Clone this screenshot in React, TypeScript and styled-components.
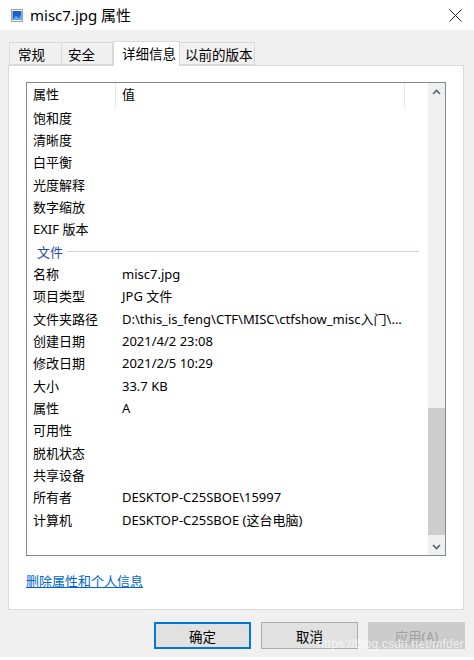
import React from "react";
import styled, { createGlobalStyle } from "styled-components";

const Global = createGlobalStyle`
  html, body { margin: 0; padding: 0; background: #ffffff; }
  body { font-family: "Noto Sans", "Noto Sans CJK SC", sans-serif; }
  * { box-sizing: border-box; }
`;

const FONT = `"Noto Sans", "Noto Sans CJK SC", sans-serif`;

const Window = styled.div`
  position: relative;
  width: 474px;
  height: 657px;
  background: #f0f0f0;
  display: flex;
  flex-direction: column;
  font-family: ${FONT};
  color: #000;
  overflow: hidden;
`;

const TitleBar = styled.div`
  height: 30px;
  background: #ffffff;
  display: flex;
  align-items: center;
  padding: 0 12px 0 11px;
  flex-shrink: 0;
`;

const Title = styled.div`
  font-size: 15px;
  margin-left: 7px;
  flex: 1;
  line-height: 1.2;
`;

const CloseBtn = styled.div`
  width: 14px;
  height: 14px;
  display: flex;
  align-items: center;
  justify-content: center;
`;

const TabStrip = styled.div`
  display: flex;
  align-items: flex-end;
  padding-left: 9px;
  margin-top: 10px;
  height: 25px;
  position: relative;
  z-index: 1;
`;

const Tab = styled.div<{ $w: number; $pl: number; $active?: boolean }>`
  width: ${(p) => p.$w}px;
  height: ${(p) => (p.$active ? 25 : 23)}px;
  padding-left: ${(p) => p.$pl}px;
  background: ${(p) => (p.$active ? "#ffffff" : "#f0f0f0")};
  border: 1px solid #d9d9d9;
  border-bottom: ${(p) => (p.$active ? "none" : "1px solid #d9d9d9")};
  border-left: ${(p) => (p.$active ? "1px solid #d9d9d9" : "none")};
  margin-bottom: ${(p) => (p.$active ? -1 : 0)}px;
  display: flex;
  align-items: center;
  font-size: 13.5px;
  white-space: nowrap;
  padding-bottom: ${(p) => (p.$active ? 3 : 0)}px;
  &:first-child { border-left: 1px solid #d9d9d9; }
`;

const Panel = styled.div`
  margin: 0 10px 0 8px;
  height: 545px;
  background: #ffffff;
  border: 1px solid #d9d9d9;
  display: flex;
  flex-direction: column;
  padding: 16px 17px 0 17px;
`;

const ListBox = styled.div`
  width: 420px;
  height: 474px;
  border: 1px solid #828790;
  display: flex;
  background: #ffffff;
`;

const ListMain = styled.div`
  flex: 1;
  display: flex;
  flex-direction: column;
  overflow: hidden;
`;

const HeaderRow = styled.div`
  height: 23.5px;
  display: grid;
  grid-template-columns: 89px 289px 1fr;
  flex-shrink: 0;
`;

const HeaderCell = styled.div<{ $divider?: boolean }>`
  font-size: 13px;
  display: flex;
  align-items: center;
  padding-left: 6px;
  padding-bottom: 2px;
  border-right: ${(p) => (p.$divider ? "1px solid #e5e5e5" : "none")};
`;

const Row = styled.div`
  height: 22.33px;
  display: grid;
  grid-template-columns: 89px 1fr;
  align-items: center;
  font-size: 13px;
  white-space: nowrap;
  flex-shrink: 0;
`;

const Cell = styled.div`
  padding-left: 6px;
  line-height: 18px;
`;

const GroupRow = styled.div`
  height: 22.33px;
  display: flex;
  align-items: center;
  padding-left: 10px;
  padding-right: 9px;
  flex-shrink: 0;
  gap: 4px;
`;

const GroupLabel = styled.span`
  font-size: 13px;
  color: #2a4a9c;
  line-height: 18px;
`;

const GroupLine = styled.div`
  flex: 1;
  height: 1px;
  background: #cbd3e6;
`;

const ScrollBar = styled.div`
  width: 17px;
  background: #f0f0f0;
  display: flex;
  flex-direction: column;
  flex-shrink: 0;
`;

const ScrollArrow = styled.div`
  height: 17px;
  display: flex;
  align-items: center;
  justify-content: center;
  flex-shrink: 0;
`;

const ScrollTrack = styled.div`
  flex: 1;
  display: flex;
  flex-direction: column;
  justify-content: flex-end;
  padding-bottom: 3px;
`;

const Thumb = styled.div`
  height: 127px;
  background: #cdcdcd;
`;

const LinkText = styled.a`
  margin-top: 16px;
  font-size: 13px;
  color: #0066cc;
  text-decoration: underline;
  cursor: pointer;
  align-self: flex-start;
  line-height: 18px;
`;

const ButtonBar = styled.div`
  display: flex;
  justify-content: flex-end;
  gap: 10px;
  padding-right: 9px;
  margin-top: 12px;
`;

const Button = styled.div<{ $primary?: boolean; $disabled?: boolean }>`
  width: 97px;
  height: 27px;
  display: flex;
  align-items: center;
  justify-content: center;
  font-size: 13.5px;
  background: ${(p) => (p.$disabled ? "#cccccc" : "#e1e1e1")};
  color: ${(p) => (p.$disabled ? "#a0a0a0" : "#000")};
  border: ${(p) =>
    p.$primary ? "2px solid #0078d7" : p.$disabled ? "1px solid #cccccc" : "1px solid #adadad"};
`;

const Watermark = styled.div`
  position: absolute;
  right: 10px;
  top: 637px;
  font-family: "Liberation Sans", sans-serif;
  font-size: 12px;
  color: rgba(255, 255, 255, 0.7);
  letter-spacing: 0.2px;
  pointer-events: none;
`;

const FileIcon = () => (
  <svg width="12" height="13" viewBox="0 0 12 13">
    <rect x="0.5" y="0.5" width="11" height="12" fill="#ffffff" stroke="#9aa4b0" />
    <rect x="1.5" y="2" width="9" height="9" fill="#1d63c4" />
    <path d="M1.5 11 L5 6.5 L7.5 9 L10.5 5.5 L10.5 11 Z" fill="#5fa8ee" />
  </svg>
);

const CloseIcon = () => (
  <svg width="13" height="13" viewBox="0 0 13 13">
    <path d="M0.5 0.5 L12.5 12.5 M12.5 0.5 L0.5 12.5" stroke="#222" strokeWidth="1" />
  </svg>
);

const Chevron = ({ up }: { up?: boolean }) => (
  <svg width="9" height="6" viewBox="0 0 9 6">
    <path
      d={up ? "M1 5 L4.5 1.5 L8 5" : "M1 1 L4.5 4.5 L8 1"}
      stroke="#606060"
      strokeWidth="1.6"
      fill="none"
    />
  </svg>
);

type Item = [string, string] | "group";

const items: Item[] = [
  ["饱和度", ""],
  ["清晰度", ""],
  ["白平衡", ""],
  ["光度解释", ""],
  ["数字缩放", ""],
  ["EXIF 版本", ""],
  "group",
  ["名称", "misc7.jpg"],
  ["项目类型", "JPG 文件"],
  ["文件夹路径", "D:\\this_is_feng\\CTF\\MISC\\ctfshow_misc入门\\..."],
  ["创建日期", "2021/4/2 23:08"],
  ["修改日期", "2021/2/5 10:29"],
  ["大小", "33.7 KB"],
  ["属性", "A"],
  ["可用性", ""],
  ["脱机状态", ""],
  ["共享设备", ""],
  ["所有者", "DESKTOP-C25SBOE\\15997"],
  ["计算机", "DESKTOP-C25SBOE (这台电脑)"],
];

export default function App() {
  return (
    <>
      <Global />
      <Window>
        <TitleBar>
          <FileIcon />
          <Title>misc7.jpg 属性</Title>
          <CloseBtn>
            <CloseIcon />
          </CloseBtn>
        </TitleBar>
        <TabStrip>
          <Tab $w={53} $pl={8}>常规</Tab>
          <Tab $w={51} $pl={6}>安全</Tab>
          <Tab $w={67} $pl={8} $active>详细信息</Tab>
          <Tab $w={75} $pl={5}>以前的版本</Tab>
        </TabStrip>
        <Panel>
          <ListBox>
            <ListMain>
              <HeaderRow>
                <HeaderCell $divider>属性</HeaderCell>
                <HeaderCell $divider>值</HeaderCell>
                <HeaderCell />
              </HeaderRow>
              {items.map((it, i) =>
                it === "group" ? (
                  <GroupRow key={i}>
                    <GroupLabel>文件</GroupLabel>
                    <GroupLine />
                  </GroupRow>
                ) : (
                  <Row key={i}>
                    <Cell>{it[0]}</Cell>
                    <Cell>{it[1]}</Cell>
                  </Row>
                )
              )}
            </ListMain>
            <ScrollBar>
              <ScrollArrow>
                <Chevron up />
              </ScrollArrow>
              <ScrollTrack>
                <Thumb />
              </ScrollTrack>
              <ScrollArrow>
                <Chevron />
              </ScrollArrow>
            </ScrollBar>
          </ListBox>
          <LinkText>删除属性和个人信息</LinkText>
        </Panel>
        <ButtonBar>
          <Button $primary>确定</Button>
          <Button>取消</Button>
          <Button $disabled>应用(A)</Button>
        </ButtonBar>
        <Watermark>https://blog.csdn.net/mfder</Watermark>
      </Window>
    </>
  );
}
